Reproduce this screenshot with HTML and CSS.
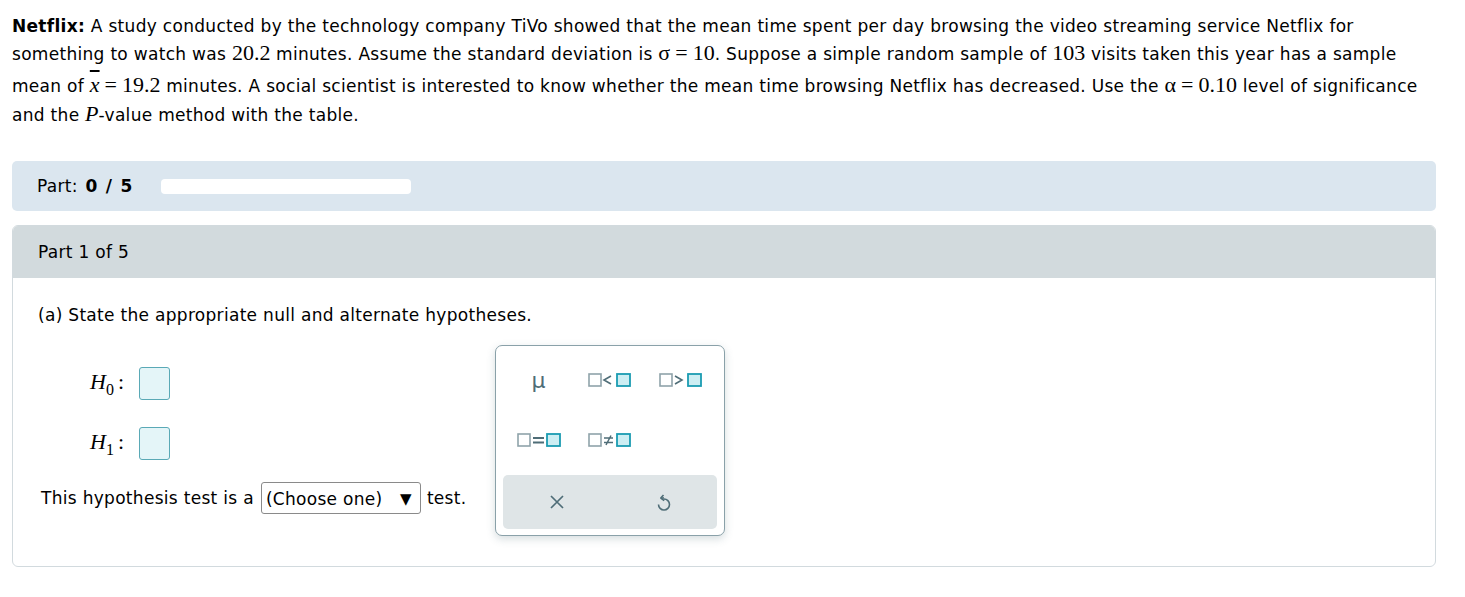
FILE: index.html
```html
<!DOCTYPE html>
<html>
<head>
<meta charset="utf-8">
<link rel="stylesheet" href="styles.css">
</head>
<body>
<div class="page">
  <p class="intro">
    <span class="line"><b>Netflix:</b> A study conducted by the technology company TiVo showed that the mean time spent per day browsing the video streaming service Netflix for</span>
    <span class="line">something to watch was <span class="m">20.2</span> minutes. Assume the standard deviation is <span class="m">σ<span class="op">=</span>10</span>. Suppose a simple random sample of <span class="m">103</span> visits taken this year has a sample</span>
    <span class="line tall">mean of <span class="m"><span class="xbar">x</span><span class="op">=</span>19.2</span> minutes. A social scientist is interested to know whether the mean time browsing Netflix has decreased. Use the <span class="m">α<span class="op">=</span>0.10</span> level of significance</span>
    <span class="line">and the <span class="m"><i>P</i></span>-value method with the table.</span>
  </p>

  <div class="progress">
    <span class="progress-label">Part: <b>0 / 5</b></span>
    <span class="progress-track"></span>
  </div>

  <div class="part">
    <div class="part-head">Part 1 of 5</div>
    <div class="part-body">
      <div class="question">(a) State the appropriate null and alternate hypotheses.</div>
      <div class="hyp">
        <span class="hlabel"><i>H</i><sub>0</sub><span class="colon">:</span></span>
        <span class="answer-box"></span>
      </div>
      <div class="hyp">
        <span class="hlabel"><i>H</i><sub>1</sub><span class="colon">:</span></span>
        <span class="answer-box"></span>
      </div>
      <div class="test-row">
        <span>This hypothesis test is a</span>
        <span class="select"><span>(Choose one)</span><span class="arrow">▼</span></span>
        <span>test.</span>
      </div>

      <div class="palette">
        <div class="pal-grid">
          <button class="pal-btn mu">μ</button>
          <button class="pal-btn">
            <svg width="44" height="14" viewBox="0 0 44 14"><rect x="1" y="1" width="12" height="12" fill="#fff" stroke="#8fa3aa" stroke-width="1.6"/><path d="M23 3 L16 7 L23 11" fill="none" stroke="#4f6d77" stroke-width="1.6"/><rect x="29" y="1" width="13" height="12" fill="#cdeef3" stroke="#1b9cb2" stroke-width="1.8"/></svg>
          </button>
          <button class="pal-btn">
            <svg width="44" height="14" viewBox="0 0 44 14"><rect x="1" y="1" width="12" height="12" fill="#fff" stroke="#8fa3aa" stroke-width="1.6"/><path d="M16 3 L23 7 L16 11" fill="none" stroke="#4f6d77" stroke-width="1.6"/><rect x="29" y="1" width="13" height="12" fill="#cdeef3" stroke="#1b9cb2" stroke-width="1.8"/></svg>
          </button>
          <button class="pal-btn">
            <svg width="44" height="14" viewBox="0 0 44 14"><rect x="1" y="1" width="12" height="12" fill="#fff" stroke="#8fa3aa" stroke-width="1.6"/><path d="M16 5 H27 M16 9.5 H27" fill="none" stroke="#4f6d77" stroke-width="1.8"/><rect x="30" y="1" width="13" height="12" fill="#cdeef3" stroke="#1b9cb2" stroke-width="1.8"/></svg>
          </button>
          <button class="pal-btn">
            <svg width="44" height="14" viewBox="0 0 44 14"><rect x="1" y="1" width="12" height="12" fill="#fff" stroke="#8fa3aa" stroke-width="1.6"/><path d="M16 5 H25 M16 9.5 H25 M23 2.5 L18 12" fill="none" stroke="#4f6d77" stroke-width="1.5"/><rect x="29" y="1" width="13" height="12" fill="#cdeef3" stroke="#1b9cb2" stroke-width="1.8"/></svg>
          </button>
        </div>
        <div class="pal-actions">
          <button class="pal-act">
            <svg width="16" height="16" viewBox="0 0 16 16"><path d="M2 2 L14 14 M14 2 L2 14" stroke="#4f6d77" stroke-width="1.7" fill="none"/></svg>
          </button>
          <button class="pal-act">
            <svg width="14" height="19" viewBox="0 0 14 19"><path d="M7 6 A5.5 5.5 0 1 1 1.5 11.5" stroke="#4f6d77" stroke-width="1.6" fill="none"/><path d="M6.5 2 L3.8 5 L7.2 7.6" stroke="#4f6d77" stroke-width="1.6" fill="none" stroke-linejoin="round"/><path d="M4 5 H7" stroke="#4f6d77" stroke-width="1.6"/></svg>
          </button>
        </div>
      </div>
    </div>
  </div>
</div>
</body>
</html>
```

FILE: styles.css
```css
* { box-sizing: border-box; }
body {
  margin: 0;
  background: #fff;
  font-family: "DejaVu Sans", Verdana, sans-serif;
  font-size: 17px;
  letter-spacing: 0.3px;
  color: #000;
}
.page {
  padding: 12px 29px 0 12px;
}
.intro {
  margin: 0;
  line-height: 28px;
}
.line { display: block; white-space: nowrap; }
.line.tall { padding-top: 3px; line-height: 30px; }
.m {
  font-family: "Liberation Serif", "Times New Roman", serif;
  font-size: 22px;
  line-height: 1;
  letter-spacing: 0;
}
.m .op { margin: 0 5px; }
.m i { font-style: italic; }
.xbar {
  font-style: italic;
  text-decoration: overline;
}
.progress {
  margin-top: 32px;
  height: 50px;
  background: #dbe6ef;
  border-radius: 5px;
  display: flex;
  align-items: center;
  padding-left: 25px;
}
.progress-label { word-spacing: 2px; }
.progress-label b { font-weight: bold; }
.progress-track {
  margin-left: 28px;
  width: 250px;
  height: 15px;
  background: #fff;
  border-radius: 4px;
}
.part {
  margin-top: 14px;
  border: 1px solid #d2dade;
  border-radius: 6px;
}
.part-head {
  height: 52px;
  background: #d2dadd;
  display: flex;
  align-items: center;
  padding-left: 25px;
  border-radius: 5px 5px 0 0;
}
.part-body {
  position: relative;
  padding: 27px 25px 52px 25px;
}
.question { line-height: 20px; }
.hyp {
  display: flex;
  align-items: center;
  margin-top: 42px;
  padding-left: 52px;
  height: 33px;
}
.hyp + .hyp { margin-top: 27px; }
.hlabel {
  font-family: "Liberation Serif", "Times New Roman", serif;
  font-size: 22px;
  letter-spacing: 0;
  width: 49px;
}
.hlabel sub { font-size: 16px; vertical-align: -6px; font-style: normal; }
.colon { margin-left: 4px; font-style: normal; }
.answer-box {
  width: 31px;
  height: 33px;
  border: 1.5px solid #5aa9b6;
  background: #e4f5f8;
  border-radius: 3px;
}
.test-row {
  display: flex;
  align-items: center;
  gap: 6px;
  margin-top: 22px;
  padding-left: 3px;
}
.select {
  display: inline-flex;
  align-items: center;
  justify-content: space-between;
  width: 160px;
  height: 32px;
  border: 1px solid #8a8a8a;
  border-radius: 3px;
  padding: 2px 8px 0 4px;
  margin-left: 1px;
}
.arrow { font-size: 15px; }
.palette {
  position: absolute;
  left: 482px;
  top: 67px;
  width: 230px;
  height: 191px;
  background: #fff;
  border: 1px solid #8aa1a9;
  border-radius: 7px;
  box-shadow: 0 3px 8px rgba(70, 100, 110, 0.22);
  padding: 4px 7px 7px 7px;
}
.pal-grid {
  display: grid;
  grid-template-columns: repeat(3, 71px);
  grid-auto-rows: 60px;
}
.pal-btn, .pal-act {
  background: none;
  border: 0;
  padding: 0;
  display: flex;
  align-items: center;
  justify-content: center;
}
.pal-btn.mu {
  font-family: "DejaVu Sans", sans-serif;
  font-size: 22px;
  color: #4f6d77;
}
.pal-actions {
  margin-top: 5px;
  height: 54px;
  background: #dfe5e7;
  border-radius: 5px;
  display: grid;
  grid-template-columns: 1fr 1fr;
}
```
